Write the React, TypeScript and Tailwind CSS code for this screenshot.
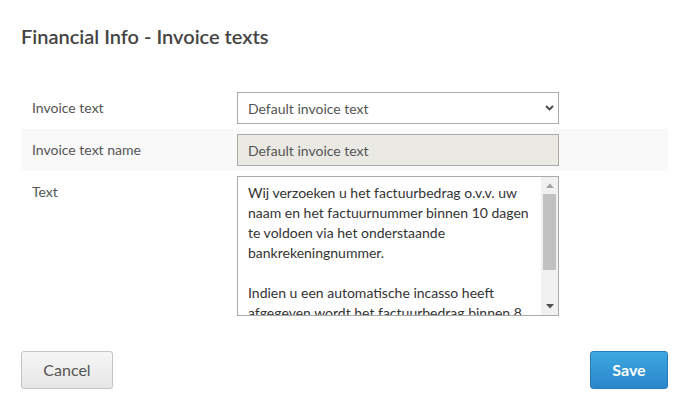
import React from "react";

const textValue =
  "Wij verzoeken u het factuurbedrag o.v.v. uw naam en het factuurnummer binnen 10 dagen te voldoen via het onderstaande bankrekeningnummer.\n\nIndien u een automatische incasso heeft afgegeven wordt het factuurbedrag binnen 8 dagen automatisch van uw rekening afgeschreven.\n\nMet vriendelijke groet,";

export default function App() {
  return (
    <div
      className="w-[689px] h-[416px] bg-white text-[#333] overflow-hidden"
      style={{ fontFamily: "Lato, 'Open Sans', sans-serif" }}
    >
      <div className="px-[21px] pt-[23px]">
        <h1 className="text-[20px] leading-[26px] font-semibold text-[#444]">
          Financial Info - Invoice texts
        </h1>

        <div className="mt-[38px] flex flex-col">
          <div className="flex items-start py-[5px] px-[11px]">
            <div className="w-[205px] leading-[32px] text-[14px] text-[#555]">Invoice text</div>
            <div className="relative w-[322px] h-[32px]">
              <select
                defaultValue="default"
                className="appearance-none w-full h-full border border-[#aaa] bg-white pl-[10px] pr-[30px] text-[14px] text-[#555] outline-none"
                style={{ fontFamily: "Lato, sans-serif" }}
              >
                <option value="default">Default invoice text</option>
              </select>
              <svg
                className="pointer-events-none absolute right-[5px] top-[13px]"
                width="9"
                height="6"
                viewBox="0 0 9 6"
              >
                <path d="M1 1 L4.5 4.5 L8 1" stroke="#444" strokeWidth="1.8" fill="none" />
              </svg>
            </div>
          </div>

          <div className="flex items-start py-[5px] px-[11px] bg-[#f9f9f9]">
            <div className="w-[205px] leading-[32px] text-[14px] text-[#555]">Invoice text name</div>
            <div className="w-[322px] h-[32px] border border-[#aaa] bg-[#eae9e3] pl-[10px] flex items-center text-[14px] text-[#555]">
              Default invoice text
            </div>
          </div>

          <div className="flex items-start py-[5px] px-[11px]">
            <div className="w-[205px] leading-[32px] text-[14px] text-[#555]">Text</div>
            <div className="w-[322px] h-[140px] border border-[#aaa] bg-white flex">
              <textarea
                readOnly
                value={textValue}
                className="flex-1 h-full bg-white pl-[10px] pr-[8px] pt-[6px] text-[14px] leading-[20px] text-[#333] resize-none overflow-hidden outline-none"
                style={{ fontFamily: "Lato, sans-serif" }}
              />
              <div className="w-[17px] h-full bg-[#f1f1f1] flex flex-col items-center">
                <div className="h-[17px] w-full flex items-center justify-center">
                  <svg width="8" height="5" viewBox="0 0 8 5">
                    <path d="M0 5 L4 0.5 L8 5 Z" fill="#a3a3a3" />
                  </svg>
                </div>
                <div className="w-[13px] h-[76px] bg-[#c1c1c1]" />
                <div className="flex-1" />
                <div className="h-[17px] w-full flex items-center justify-center">
                  <svg width="8" height="5" viewBox="0 0 8 5">
                    <path d="M0 0 L4 4.5 L8 0 Z" fill="#505050" />
                  </svg>
                </div>
              </div>
            </div>
          </div>
        </div>

        <div className="mt-[30px] flex justify-between">
          <button className="w-[92px] h-[38px] rounded-[3px] border border-[#c4c4c4] bg-gradient-to-b from-[#f6f6f6] to-[#e6e6e6] text-[16px] text-[#555]">
            Cancel
          </button>
          <button className="w-[78px] h-[38px] rounded-[3px] border border-[#2a7ab8] bg-gradient-to-b from-[#3ca8df] to-[#2b86cc] text-[16px] font-bold text-white">
            Save
          </button>
        </div>
      </div>
    </div>
  );
}
